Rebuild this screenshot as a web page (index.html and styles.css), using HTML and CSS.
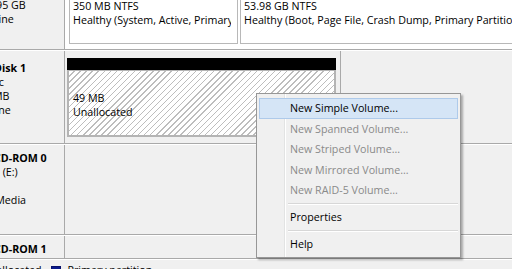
FILE: index.html
```html
<!DOCTYPE html>
<html>
<head>
<meta charset="utf-8">
<link rel="stylesheet" href="styles.css">
</head>
<body>
<div class="screen">
  <div class="row row-d0">
    <div class="label">
      <div class="lbl-in lbl-d0">
        <div class="line">59.95 GB</div>
        <div class="line">Online</div>
      </div>
    </div>
    <div class="parts parts-d0">
      <div class="part part-a">
        <div class="pline">350 MB NTFS</div>
        <div class="pline">Healthy (System, Active, Primary Partition)</div>
      </div>
      <div class="part part-b">
        <div class="pline">53.98 GB NTFS</div>
        <div class="pline">Healthy (Boot, Page File, Crash Dump, Primary Partition)</div>
      </div>
    </div>
  </div>

  <div class="row row-d1">
    <div class="label">
      <div class="lbl-in lbl-d1">
        <div class="line bold"><span class="dicon"></span>Disk 1</div>
        <div class="line">Basic</div>
        <div class="line">49 MB</div>
        <div class="line">Online</div>
      </div>
    </div>
    <div class="parts parts-d1">
      <div class="diskbox">
        <div class="bar"></div>
        <div class="hatch">
          <div class="hline">49 MB</div>
          <div class="hline">Unallocated</div>
        </div>
      </div>
    </div>
  </div>

  <div class="row row-cd0">
    <div class="label">
      <div class="lbl-in lbl-cd0">
        <div class="line bold"><span class="dicon"></span>CD-ROM 0</div>
        <div class="line">DVD (E:)</div>
        <div class="line">&nbsp;</div>
        <div class="line">No Media</div>
      </div>
    </div>
    <div class="parts"></div>
  </div>

  <div class="row row-cd1">
    <div class="label">
      <div class="lbl-in lbl-cd1">
        <div class="line bold"><span class="dicon"></span>CD-ROM 1</div>
      </div>
    </div>
    <div class="parts"></div>
  </div>

  <div class="legend">
    <span class="sw sw-black"></span><span class="lg">Unallocated</span>
    <span class="sw sw-blue"></span><span class="lg">Primary partition</span>
  </div>

  <div class="menu">
    <div class="mi hot">New Simple Volume...</div>
    <div class="mi dis">New Spanned Volume...</div>
    <div class="mi dis">New Striped Volume...</div>
    <div class="mi dis">New Mirrored Volume...</div>
    <div class="mi dis">New RAID-5 Volume...</div>
    <div class="msep"></div>
    <div class="mi">Properties</div>
    <div class="msep"></div>
    <div class="mi">Help</div>
  </div>
</div>
</body>
</html>
```

FILE: styles.css
```css
html, body {
  margin: 0;
  padding: 0;
  background: #f0f0f0;
}
body {
  width: 512px;
  height: 269px;
  overflow: hidden;
  font-family: "Open Sans", "Noto Sans", sans-serif;
  font-size: 10.7px;
  color: #000;
}
.screen {
  position: relative;
  width: 512px;
  height: 269px;
  overflow: hidden;
  display: flex;
  flex-direction: column;
}
.row {
  display: flex;
  border-bottom: 1px solid #a9a9a9;
  box-shadow: 0 1px 0 #fff;
  margin-bottom: 1px;
  flex: none;
}
.row-d0 { height: 49px; }
.row-d1 { height: 92px; }
.row-cd0 { height: 89px; }
.row-cd1 { height: 22px; }

.label {
  width: 64px;
  flex: none;
  border-right: 1px solid #a9a9a9;
  overflow: hidden;
  background: #f0f0f0;
}
.lbl-in {
  margin-left: -22px;
  white-space: nowrap;
}
.lbl-d0 { margin-left: -19px; margin-top: -2px; }
.lbl-d1 { padding-top: 10px; }
.lbl-cd0 { padding-top: 6px; }
.lbl-cd1 { padding-top: 6px; }
.line {
  height: 14px;
  line-height: 14px;
}
.bold { font-weight: 700; }
.dicon {
  display: inline-block;
  width: 13px;
  height: 10px;
  margin-right: 3px;
  background: #8a8a8a;
  vertical-align: -1px;
}
.parts {
  flex: 1;
  display: flex;
  background: #f0f0f0;
  min-width: 0;
}
.parts-d0 {
  background: #fff;
  padding: 0 0 5px 4px;
  gap: 2px;
}
.part {
  border: 1px solid #b8b8b8;
  border-top: none;
  background: #fff;
  padding: 0 0 0 3px;
  white-space: nowrap;
  overflow: hidden;
  margin-top: -3px;
  padding-top: 2px;
}
.part-a { width: 164px; flex: none; }
.part-b { flex: 1; border-right: none; }
.pline {
  height: 14px;
  line-height: 14px;
  overflow: hidden;
  margin-right: 6px;
}
.part-b .pline { margin-right: 0; }
.diskbox {
  width: 276px;
  border-right: 1px solid #a9a9a9;
  padding: 7px 4px 0 2px;
  box-sizing: border-box;
}
.bar {
  height: 12px;
  background: #000;
}
.hatch {
  height: 67px;
  box-sizing: border-box;
  border: 2px solid #b4b4b4;
  border-top: 1px solid #b4b4b4;
  padding: 3px 0 0 4px;
  display: flex;
  flex-direction: column;
  justify-content: center;
  background: repeating-linear-gradient(135deg, #ffffff 0 3.3px, #bdbdbd 3.3px 4.3px);
}
.hline {
  height: 14px;
  line-height: 14px;
  white-space: nowrap;
}

.legend {
  flex: 1;
  display: flex;
  align-items: flex-start;
  padding-top: 3px;
  margin-left: -31px;
  white-space: nowrap;
  background: #f0f0f0;
}
.sw {
  display: inline-block;
  width: 8px;
  height: 8px;
  margin: 3px 3px 0 0;
  border: 1px solid #555;
}
.sw-black { background: #000; }
.sw-blue { background: #0a1a8c; border-color: #08106a; margin-left: 9px; margin-right: 7px; }
.lg { line-height: 14px; }

.menu {
  position: absolute;
  left: 256px;
  top: 93px;
  width: 199px;
  padding: 4px 2px 3px 2px;
  background: #f0f0f0 linear-gradient(90deg, transparent 27px, #e2e3e3 27px, #e2e3e3 28px, #fff 28px, #fff 29px, transparent 29px);
  border: 1px solid #979797;
  box-shadow: 2px 2px 2px rgba(0, 0, 0, 0.3);
}
.mi {
  height: 20.6px;
  line-height: 19px;
  padding-left: 30px;
  box-sizing: border-box;
  border: 1px solid transparent;
}
.mi.hot {
  background: #d5e5f6;
  border-color: #aecaea;
}
.mi.dis { color: #8a8a8a; }
.msep {
  height: 6px;
  margin-left: 29px;
  background: linear-gradient(#0000 2px, #d7d7d7 2px, #d7d7d7 3px, #fff 3px, #fff 4px, #0000 4px);
}
```
